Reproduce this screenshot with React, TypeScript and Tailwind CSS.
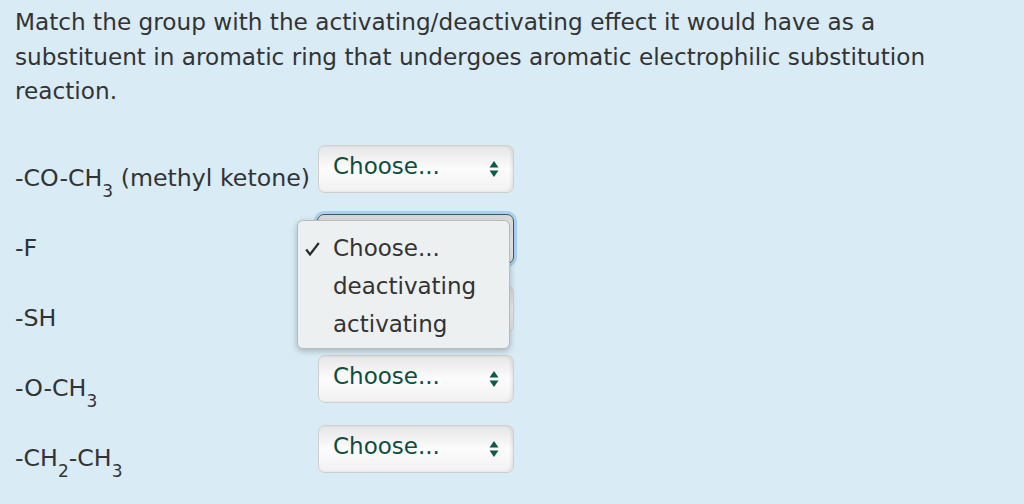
import React from 'react';

const font = { fontFamily: '"DejaVu Sans", Verdana, sans-serif' };

const Arrows: React.FC = () => (
    <svg width="10" height="18" viewBox="0 0 10 18" className="shrink-0">
        <path d="M5 1 L9.5 7.5 L0.5 7.5 Z" fill="#0c5a47" />
        <path d="M5 17 L9.5 10.5 L0.5 10.5 Z" fill="#0c5a47" />
    </svg>
);

const Check: React.FC = () => (
    <svg width="15" height="14" viewBox="0 0 15 14">
        <path d="M1.2 7.5 L5 12.5 L13.8 1" fill="none" stroke="#2b2b2b" strokeWidth="2.2" strokeLinejoin="miter" />
    </svg>
);

const Select: React.FC<{ focused?: boolean; hidden?: boolean }> = ({ focused, hidden }) => (
    <div
        className={
            focused
                ? 'w-[197px] h-[50px] rounded-[7px] border border-[#2f5f52] ring-[3px] ring-[#a9cff2] bg-gradient-to-b from-[#dedede] via-[#f6f6f6] to-[#ededed] flex items-center justify-between pl-[15px] pr-[14px] shadow-inner'
                : 'w-[196px] h-[48px] rounded-[7px] border border-[#cfcfcf] bg-gradient-to-b from-[#e6e6e6] via-[#fcfcfc] to-[#f1f1f1] flex items-center justify-between pl-[14px] pr-[14px] shadow-[inset_-2px_0_3px_rgba(0,0,0,0.08)]'
        }
    >
        {/* text under the open menu is covered anyway */}
        {!focused && !hidden && (
            <>
                <span className="text-[23px] text-[#0d4d40] leading-none -mt-[4px]">Choose...</span>
                <Arrows />
            </>
        )}
    </div>
);

const sub = 'text-[17px] align-[-7px]';

const rows: { label: React.ReactNode; focused?: boolean; hidden?: boolean }[] = [
    { label: <>-CO-CH<sub className={sub}>3</sub> (methyl ketone)</> },
    { label: <>-F</>, focused: true },
    { label: <>-SH</>, hidden: true },
    { label: <>-O-CH<sub className={sub}>3</sub></> },
    { label: <>-CH<sub className={sub}>2</sub>-CH<sub className={sub}>3</sub></> },
];

const App: React.FC = () => {
    return (
        <div className="w-[1024px] h-[504px] bg-[#d9ebf5] text-[#333333] relative overflow-hidden" style={font}>
            <p className="w-[970px] px-[15px] pt-[5px] text-[23.2px] leading-[34.5px]">
                Match the group with the activating/deactivating effect it would have as a substituent in aromatic ring that undergoes aromatic electrophilic substitution reaction.
            </p>

            <div className="mt-[36px] pl-[15px] flex flex-col">
                {rows.map((row, i) => (
                    <div key={i} className="h-[70px] flex items-start">
                        <div className="w-[303px] pt-[18px] text-[23.7px] leading-[30px] whitespace-nowrap">{row.label}</div>
                        <div className={row.focused ? '-mt-[1px] -ml-[1px]' : ''}>
                            <Select focused={row.focused} hidden={row.hidden} />
                        </div>
                    </div>
                ))}
            </div>

            {/* open dropdown menu */}
            <div className="absolute left-[297px] top-[220px] w-[213px] h-[129px] rounded-[6px] bg-[#edf0f0] border border-[#b9bcbc] shadow-[0_2px_6px_rgba(0,0,0,0.25)] pt-[8px] text-[23px] text-[#333333]">
                <div className="h-[38px] flex items-center">
                    <span className="w-[35px] pl-[7px] pt-[2px] flex items-center">
                        <Check />
                    </span>
                    <span>Choose...</span>
                </div>
                <div className="h-[38px] flex items-center pl-[35px]">deactivating</div>
                <div className="h-[38px] flex items-center pl-[35px]">activating</div>
            </div>
        </div>
    );
};

export default App;
